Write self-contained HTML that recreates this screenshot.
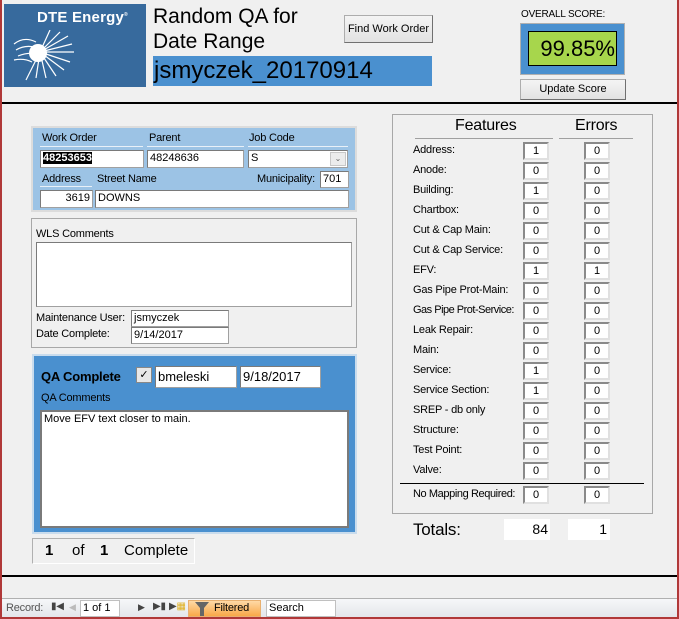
<!DOCTYPE html>
<html><head><meta charset="utf-8"><style>
*{box-sizing:border-box;margin:0;padding:0}
body{width:679px;height:619px;background:#f0f0f0;font-family:"Liberation Sans",Arial,sans-serif;font-size:11px;color:#000;position:relative;overflow:hidden}
.a{position:absolute}
.in{position:absolute;background:#fff;border:1px solid #a0a0a0;border-top-color:#7a7a7a;border-left-color:#7a7a7a;height:17px;line-height:15px;padding:0 2px;font-size:11px;white-space:nowrap}
.btn{position:absolute;background:linear-gradient(#f4f4f4,#e2e2e2);border:1px solid #adadad;border-right-color:#707070;border-bottom-color:#707070;text-align:center;font-size:11px}
.lbl{position:absolute;font-size:11px;white-space:nowrap;letter-spacing:-0.2px}
.num{position:absolute;background:#fff;border:2px solid #8a8a8a;border-right-color:#e0e0e0;border-bottom-color:#e0e0e0;width:26px;height:18px;text-align:center;line-height:14px;font-size:11px}
</style></head><body>
<div class="a" style="left:0;top:0;width:2px;height:619px;background:#b03838"></div>
<div class="a" style="left:677px;top:0;width:2px;height:619px;background:#b03838"></div>
<div class="a" style="left:0;top:617px;width:679px;height:2px;background:#b03838"></div>

<div class="a" style="left:4px;top:4px;width:142px;height:83px;background:#376a9d"></div>
<div class="a" style="left:37px;top:9px;color:#fff;font-weight:bold;font-size:15px;letter-spacing:0.2px">DTE Energy<sup style="font-size:5px">®</sup></div>
<svg class="a" style="left:10px;top:30px" width="66" height="54" viewBox="0 0 66 54">
<g stroke="#fff" stroke-width="1.2">
<line x1="30" y1="22" x2="58" y2="6"/><line x1="30" y1="22" x2="62" y2="14"/><line x1="30" y1="22" x2="64" y2="22"/><line x1="30" y1="22" x2="60" y2="32"/><line x1="30" y1="22" x2="54" y2="40"/><line x1="30" y1="22" x2="46" y2="46"/><line x1="30" y1="22" x2="36" y2="48"/><line x1="30" y1="22" x2="26" y2="48"/><line x1="30" y1="22" x2="16" y2="50"/><line x1="30" y1="22" x2="50" y2="2"/><line x1="30" y1="22" x2="40" y2="0"/>
<path d="M4 14 Q14 6 26 12 M6 20 Q16 14 28 18 M8 26 Q18 22 28 24 M4 30 Q14 28 22 32" fill="none"/>
</g>
<circle cx="28" cy="23" r="9" fill="#fff"/>
</svg>

<div class="a" style="left:153px;top:4px;font-size:21px;line-height:25px">Random QA for<br>Date Range</div>
<div class="a" style="left:153px;top:56px;width:279px;height:30px;background:#4a90cf;font-size:24px;line-height:30px;padding-left:1px">jsmyczek_20170914</div>
<div class="btn" style="left:344px;top:15px;width:89px;height:28px;line-height:26px">Find Work Order</div>

<div class="lbl" style="left:521px;top:9px;font-size:10px">OVERALL SCORE:</div>
<div class="a" style="left:520px;top:23px;width:105px;height:52px;background:#4a90cf;border:1px solid #b0b0b0"></div>
<div class="a" style="left:528px;top:31px;width:89px;height:35px;background:#a7d64c;border:1px solid #000;font-size:22px;line-height:33px;text-align:right;padding-right:1px">99.85%</div>
<div class="btn" style="left:520px;top:79px;width:106px;height:21px;line-height:19px">Update Score</div>

<div class="a" style="left:2px;top:102px;width:675px;height:2px;background:#000"></div>

<div class="a" style="left:31px;top:126px;width:326px;height:86px;background:#9cc3e5;border:2px solid #dcdcdc"></div>
<div class="lbl" style="left:42px;top:132px">Work Order</div>
<div class="lbl" style="left:149px;top:132px">Parent</div>
<div class="lbl" style="left:249px;top:132px">Job Code</div>
<div class="a" style="left:40px;top:146px;width:103px;height:1px;background:#e8f0f8"></div>
<div class="a" style="left:147px;top:146px;width:97px;height:1px;background:#e8f0f8"></div>
<div class="a" style="left:248px;top:146px;width:100px;height:1px;background:#e8f0f8"></div>
<div class="in" style="left:40px;top:150px;width:104px;height:18px"><span style="background:#000;color:#fff;font-weight:bold">48253653</span></div>
<div class="in" style="left:147px;top:150px;width:97px;height:18px">48248636</div>
<div class="in" style="left:248px;top:150px;width:100px;height:18px">S<span class="a" style="right:1px;top:1px;width:16px;height:14px;background:#ececec;border:1px solid #c8c8c8;font-size:8px;text-align:center;color:#666;line-height:12px">&#8964;</span></div>
<div class="lbl" style="left:42px;top:173px">Address</div>
<div class="lbl" style="left:97px;top:173px">Street Name</div>
<div class="lbl" style="left:257px;top:173px">Municipality:</div>
<div class="a" style="left:40px;top:186px;width:52px;height:1px;background:#e8f0f8"></div>
<div class="in" style="left:320px;top:171px;width:29px;height:17px">701</div>
<div class="in" style="left:40px;top:190px;width:53px;height:18px;text-align:right">3619</div>
<div class="in" style="left:95px;top:190px;width:254px;height:18px">DOWNS</div>

<div class="a" style="left:31px;top:218px;width:326px;height:130px;border:1px solid #a8a8a8"></div>
<div class="lbl" style="left:36px;top:228px">WLS Comments</div>
<div class="in" style="left:36px;top:242px;width:316px;height:65px"></div>
<div class="lbl" style="left:36px;top:312px">Maintenance User:</div>
<div class="in" style="left:131px;top:310px;width:98px;height:17px">jsmyczek</div>
<div class="lbl" style="left:36px;top:328px">Date Complete:</div>
<div class="in" style="left:131px;top:327px;width:98px;height:17px">9/14/2017</div>

<div class="a" style="left:32px;top:354px;width:325px;height:180px;background:#4a90cf;border:2px solid #c9dced"></div>
<div class="lbl" style="left:41px;top:369px;font-weight:bold;font-size:13px">QA Complete</div>
<div class="a" style="left:136px;top:367px;width:16px;height:16px;background:#e8e8e8;border:1px solid #888;font-size:11px;line-height:14px;text-align:center">&#10003;</div>
<div class="in" style="left:155px;top:366px;width:82px;height:22px;font-size:13px;line-height:19px">bmeleski</div>
<div class="in" style="left:240px;top:366px;width:81px;height:22px;font-size:13px;line-height:19px">9/18/2017</div>
<div class="lbl" style="left:41px;top:392px">QA Comments</div>
<div class="in" style="left:40px;top:410px;width:309px;height:118px;border:2px solid #7a7a7a;line-height:13px;padding-top:1px">Move EFV text closer to main.</div>

<div class="a" style="left:32px;top:538px;width:163px;height:26px;border:1px solid #b0b0b0;border-right-color:#fff;border-bottom-color:#fff;font-size:15px;line-height:23px;white-space:nowrap"><b style="position:absolute;left:12px">1</b><span style="position:absolute;left:39px">of</span><b style="position:absolute;left:67px">1</b><span style="position:absolute;left:91px">Complete</span></div>

<div class="a" style="left:392px;top:114px;width:261px;height:400px;border:1px solid #a8a8a8"></div>
<div class="lbl" style="left:455px;top:117px;font-size:16px">Features</div>
<div class="lbl" style="left:575px;top:117px;font-size:16px">Errors</div>
<div class="a" style="left:415px;top:138px;width:138px;height:1px;background:#a0a0a0"></div>
<div class="a" style="left:559px;top:138px;width:74px;height:1px;background:#a0a0a0"></div>

<div class="lbl" style="left:413px;top:144px">Address:</div><div class="num" style="left:523px;top:142px">1</div><div class="num" style="left:584px;top:142px">0</div>
<div class="lbl" style="left:413px;top:164px">Anode:</div><div class="num" style="left:523px;top:162px">0</div><div class="num" style="left:584px;top:162px">0</div>
<div class="lbl" style="left:413px;top:184px">Building:</div><div class="num" style="left:523px;top:182px">1</div><div class="num" style="left:584px;top:182px">0</div>
<div class="lbl" style="left:413px;top:204px">Chartbox:</div><div class="num" style="left:523px;top:202px">0</div><div class="num" style="left:584px;top:202px">0</div>
<div class="lbl" style="left:413px;top:224px">Cut &amp; Cap Main:</div><div class="num" style="left:523px;top:222px">0</div><div class="num" style="left:584px;top:222px">0</div>
<div class="lbl" style="left:413px;top:244px">Cut &amp; Cap Service:</div><div class="num" style="left:523px;top:242px">0</div><div class="num" style="left:584px;top:242px">0</div>
<div class="lbl" style="left:413px;top:264px">EFV:</div><div class="num" style="left:523px;top:262px">1</div><div class="num" style="left:584px;top:262px">1</div>
<div class="lbl" style="left:413px;top:284px">Gas Pipe Prot-Main:</div><div class="num" style="left:523px;top:282px">0</div><div class="num" style="left:584px;top:282px">0</div>
<div class="lbl" style="left:413px;top:304px;letter-spacing:-0.5px">Gas Pipe Prot-Service:</div><div class="num" style="left:523px;top:302px">0</div><div class="num" style="left:584px;top:302px">0</div>
<div class="lbl" style="left:413px;top:324px">Leak Repair:</div><div class="num" style="left:523px;top:322px">0</div><div class="num" style="left:584px;top:322px">0</div>
<div class="lbl" style="left:413px;top:344px">Main:</div><div class="num" style="left:523px;top:342px">0</div><div class="num" style="left:584px;top:342px">0</div>
<div class="lbl" style="left:413px;top:364px">Service:</div><div class="num" style="left:523px;top:362px">1</div><div class="num" style="left:584px;top:362px">0</div>
<div class="lbl" style="left:413px;top:384px">Service Section:</div><div class="num" style="left:523px;top:382px">1</div><div class="num" style="left:584px;top:382px">0</div>
<div class="lbl" style="left:413px;top:404px">SREP - db only</div><div class="num" style="left:523px;top:402px">0</div><div class="num" style="left:584px;top:402px">0</div>
<div class="lbl" style="left:413px;top:424px">Structure:</div><div class="num" style="left:523px;top:422px">0</div><div class="num" style="left:584px;top:422px">0</div>
<div class="lbl" style="left:413px;top:444px">Test Point:</div><div class="num" style="left:523px;top:442px">0</div><div class="num" style="left:584px;top:442px">0</div>
<div class="lbl" style="left:413px;top:464px">Valve:</div><div class="num" style="left:523px;top:462px">0</div><div class="num" style="left:584px;top:462px">0</div>
<div class="a" style="left:400px;top:483px;width:244px;height:1px;background:#000"></div>
<div class="lbl" style="left:413px;top:488px;letter-spacing:-0.4px">No Mapping Required:</div><div class="num" style="left:523px;top:486px">0</div><div class="num" style="left:584px;top:486px">0</div>

<div class="lbl" style="left:413px;top:520px;font-size:17px">Totals:</div>
<div class="a" style="left:504px;top:519px;width:46px;height:21px;background:#fff;text-align:right;font-size:14px;line-height:21px;padding-right:2px">84</div>
<div class="a" style="left:568px;top:519px;width:42px;height:21px;background:#fff;text-align:right;font-size:14px;line-height:21px;padding-right:3px">1</div>

<div class="a" style="left:2px;top:575px;width:675px;height:2px;background:#000"></div>

<div class="a" style="left:2px;top:598px;width:675px;height:19px;background:linear-gradient(#f6f7f9,#e4e6ea);border-top:1px solid #b0b0b0"></div>
<div class="lbl" style="left:6px;top:602px;color:#555">Record:</div>
<div class="lbl" style="left:51px;top:601px;color:#444;font-size:10px">&#9646;&#9664;</div>
<div class="lbl" style="left:69px;top:602px;color:#bbb;font-size:9px">&#9664;</div>
<div class="in" style="left:80px;top:600px;width:40px;height:17px;border-color:#c0c0c0">1 of 1</div>
<div class="lbl" style="left:138px;top:602px;color:#444;font-size:9px">&#9654;</div>
<div class="lbl" style="left:153px;top:601px;color:#444;font-size:10px">&#9654;&#9646;</div>
<div class="lbl" style="left:169px;top:601px;color:#444;font-size:10px">&#9654;<span style="color:#e0b020">&#9638;</span></div>
<div class="a" style="left:188px;top:600px;width:73px;height:17px;background:linear-gradient(#ffd9a6,#f8a848);border:1px solid #e8b070"></div>
<svg class="a" style="left:195px;top:601px" width="14" height="15"><path d="M0 1 H14 L9 7 V15 H5 V7 Z" fill="#666"/></svg>
<div class="lbl" style="left:214px;top:602px">Filtered</div>
<div class="in" style="left:266px;top:600px;width:70px;height:17px;border-color:#c0c0c0">Search</div>
</body></html>
